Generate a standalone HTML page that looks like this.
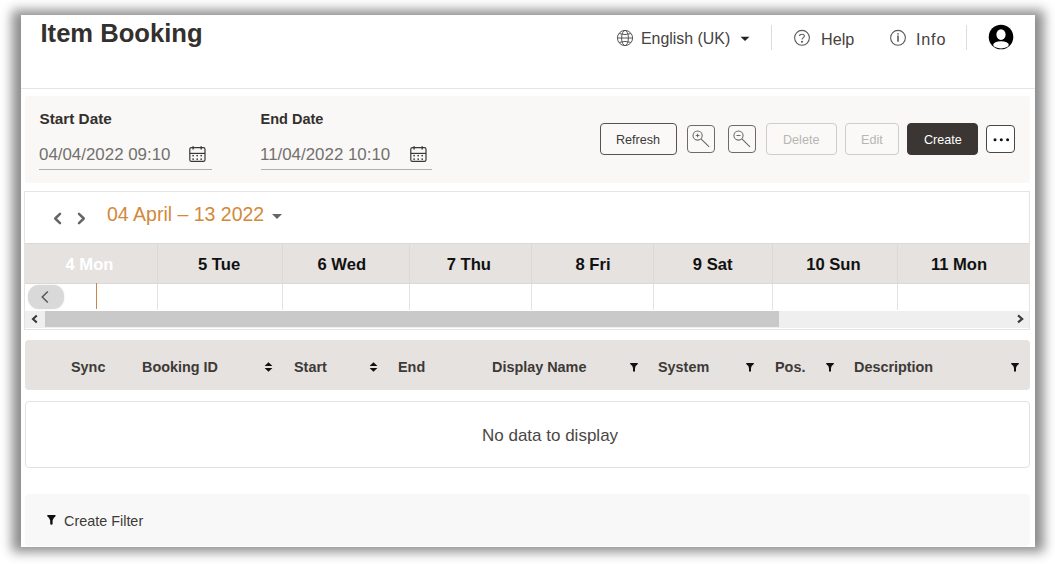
<!DOCTYPE html>
<html><head><meta charset="utf-8">
<style>
*{box-sizing:border-box;margin:0;padding:0}
html,body{width:1055px;height:564px;overflow:hidden;background:#fff}
body{position:relative;font-family:"Liberation Sans",sans-serif;color:#32302e}
.a{position:absolute;white-space:nowrap;line-height:1}
#shadow{position:absolute;left:12px;top:10px;width:1032px;height:542px;background:rgba(0,0,0,0.45);filter:blur(6px)}
#card{position:absolute;left:21px;top:15px;width:1014px;height:532px;background:#fff}
.b{font-weight:bold}
.dh{top:257px;font-size:16.6px}
.hdrline{position:absolute;left:21px;top:88px;width:1014px;height:1px;background:#e6e6e6}
.panel{position:absolute;left:25px;top:96px;width:1005px;height:87px;background:#f9f8f7;border-radius:3px}
.uline{position:absolute;height:1px;background:#b0aeac}
.btn{position:absolute;border:1px solid #5a5652;border-radius:4px;background:#faf9f8}
.btn.dis{border-color:#cfccc9}
.vsep{position:absolute;width:1px;background:#dcdcdc}
.cal{position:absolute;left:24px;top:191px;width:1006px;height:139px;border:1px solid #e4e4e4;background:#fff}
.dayhdr{position:absolute;left:25px;top:243px;width:1004px;height:41px;background:#e5e2df;border-top:1px solid #dbd8d5;border-bottom:1px solid #dbd8d5}
.csep{position:absolute;width:1px;background:#dbd8d5}
.rsep{position:absolute;width:1px;background:#e3e3e3}
.thead{position:absolute;left:25px;top:340px;width:1005px;height:50px;background:#e5e2df;border-radius:4px}
.nodata{position:absolute;left:25px;top:401px;width:1005px;height:67px;border:1px solid #e2e2e2;border-radius:4px;background:#fff}
.fpanel{position:absolute;left:25px;top:494px;width:1005px;height:51.5px;background:#f8f8f8;border-radius:4px}
</style></head><body>
<div id="shadow"></div><div id="card"></div>
<!-- header -->
<div class="a b" style="left:40.5px;top:21px;font-size:25.6px;color:#33302d">Item Booking</div>
<div class="hdrline"></div>

<svg class="a" style="left:616px;top:29px" width="18" height="18" viewBox="0 0 18 18" fill="none" stroke="#505050" stroke-width="0.95">
 <circle cx="9" cy="9" r="7.6"/><ellipse cx="9" cy="9" rx="3.4" ry="7.6"/><line x1="1.4" y1="9" x2="16.6" y2="9"/><path d="M3.2 4.6 Q9 6.6 14.8 4.6"/><path d="M3.2 13.4 Q9 11.4 14.8 13.4"/>
</svg>
<div class="a" style="left:641px;top:30.5px;font-size:15.9px;color:#454240">English (UK)</div>
<svg class="a" style="left:740px;top:36px" width="10" height="6" viewBox="0 0 10 6"><path d="M0.5 0.8 L9.5 0.8 L5 5 Z" fill="#222"/></svg>
<div class="vsep" style="left:771px;top:25px;height:25px"></div>

<svg class="a" style="left:793px;top:29px" width="18" height="18" viewBox="0 0 18 18" fill="none" stroke="#5a5a5a" stroke-width="1.1">
 <circle cx="9" cy="8.8" r="7.4"/>
 <path d="M6.6 7 C6.6 4.6 11.4 4.6 11.4 7 C11.4 8.6 9 8.8 9 10.6" />
 <circle cx="9" cy="12.8" r="0.5" fill="#555"/>
</svg>
<div class="a" style="left:821px;top:31px;font-size:16.2px;color:#454240">Help</div>

<svg class="a" style="left:889px;top:29px" width="18" height="18" viewBox="0 0 18 18" fill="none" stroke="#5a5a5a" stroke-width="1.1">
 <circle cx="9" cy="8.8" r="7.4"/>
 <line x1="9" y1="6.6" x2="9" y2="12.8" stroke-width="1.6"/><circle cx="9" cy="4.9" r="0.8" fill="#5a5a5a" stroke="none"/>
</svg>
<div class="a" style="left:916px;top:31px;font-size:16.2px;letter-spacing:0.8px;color:#454240">Info</div>
<div class="vsep" style="left:966px;top:25px;height:25px"></div>

<svg class="a" style="left:988px;top:24px" width="26" height="26" viewBox="0 0 26 26">
 <defs><clipPath id="cc"><circle cx="13" cy="13" r="12.3"/></clipPath></defs>
 <circle cx="13" cy="13" r="12.3" fill="#000"/>
 <g clip-path="url(#cc)" fill="#fff">
  <ellipse cx="13" cy="10.6" rx="4.6" ry="5.3"/>
  <ellipse cx="13" cy="20.8" rx="7.8" ry="3.6"/>
 </g>
</svg>

<!-- date panel -->
<div class="panel"></div>
<div class="a b" style="left:39.5px;top:111px;font-size:15.3px;color:#33302d">Start Date</div>
<div class="a" style="left:39px;top:146.5px;font-size:16.9px;color:#73706d">04/04/2022 09:10</div>
<div class="uline" style="left:39px;top:169px;width:173px"></div>
<div class="a b" style="left:260.5px;top:111.5px;font-size:14.5px;color:#33302d">End Date</div>
<div class="a" style="left:260px;top:146.5px;font-size:16.9px;color:#73706d">11/04/2022 10:10</div>
<div class="uline" style="left:261px;top:169px;width:171px"></div>

<svg class="a" style="left:189px;top:146px" width="17" height="17" viewBox="0 0 17 17" fill="none" stroke="#3a3836" stroke-width="1.2">
 <rect x="0.8" y="1.6" width="15.2" height="13.8" rx="1.6"/><line x1="0.8" y1="7.4" x2="16" y2="7.4"/>
 <line x1="4.1" y1="0.2" x2="4.1" y2="3.6" stroke-width="1.4"/><line x1="12.2" y1="0.2" x2="12.2" y2="3.6" stroke-width="1.4"/>
 <g fill="#3a3836" stroke="none"><rect x="3.35" y="8.9" width="1.5" height="1.5"/><rect x="7.45" y="8.9" width="1.5" height="1.5"/><rect x="11.45" y="8.9" width="1.5" height="1.5"/><rect x="3.35" y="12.4" width="1.5" height="1.5"/><rect x="7.45" y="12.4" width="1.5" height="1.5"/><rect x="11.45" y="12.4" width="1.5" height="1.5"/></g>
</svg>
<svg class="a" style="left:410px;top:146px" width="17" height="17" viewBox="0 0 17 17" fill="none" stroke="#3a3836" stroke-width="1.2">
 <rect x="0.8" y="1.6" width="15.2" height="13.8" rx="1.6"/><line x1="0.8" y1="7.4" x2="16" y2="7.4"/>
 <line x1="4.1" y1="0.2" x2="4.1" y2="3.6" stroke-width="1.4"/><line x1="12.2" y1="0.2" x2="12.2" y2="3.6" stroke-width="1.4"/>
 <g fill="#3a3836" stroke="none"><rect x="3.35" y="8.9" width="1.5" height="1.5"/><rect x="7.45" y="8.9" width="1.5" height="1.5"/><rect x="11.45" y="8.9" width="1.5" height="1.5"/><rect x="3.35" y="12.4" width="1.5" height="1.5"/><rect x="7.45" y="12.4" width="1.5" height="1.5"/><rect x="11.45" y="12.4" width="1.5" height="1.5"/></g>
</svg>

<!-- buttons -->
<div class="btn" style="left:600px;top:123px;width:77px;height:32px;border-width:1.6px;border-color:#57534f"></div>
<div class="a" style="left:616px;top:134px;font-size:12.6px;color:#3d3a37">Refresh</div>
<div class="btn" style="left:687px;top:125px;width:28px;height:28px;border-color:#6e6a67;border-width:1.3px"></div>
<svg class="a" style="left:687px;top:125px" width="28" height="28" viewBox="0 0 28 28" fill="none" stroke="#666" stroke-width="1.05">
 <circle cx="10.6" cy="10.5" r="4.6"/><line x1="14" y1="13.8" x2="22.2" y2="21.9"/><line x1="8.8" y1="10.5" x2="12.4" y2="10.5"/><line x1="10.6" y1="8.7" x2="10.6" y2="12.3"/>
</svg>
<div class="btn" style="left:728px;top:125px;width:28px;height:28px;border-color:#6e6a67;border-width:1.3px"></div>
<svg class="a" style="left:728px;top:125px" width="28" height="28" viewBox="0 0 28 28" fill="none" stroke="#666" stroke-width="1.05">
 <circle cx="10.5" cy="10.5" r="4.6"/><line x1="13.9" y1="13.8" x2="22" y2="21.9"/><line x1="8.5" y1="10.5" x2="12.5" y2="10.5"/>
</svg>
<div class="btn dis" style="left:766px;top:123px;width:71px;height:32px"></div>
<div class="a" style="left:783px;top:134px;font-size:12.6px;color:#b8b5b2">Delete</div>
<div class="btn dis" style="left:845px;top:123px;width:54px;height:32px"></div>
<div class="a" style="left:861px;top:134px;font-size:12.6px;color:#b8b5b2">Edit</div>
<div class="btn" style="left:907px;top:123px;width:71px;height:32px;background:#3b3633;border-color:#3b3633"></div>
<div class="a" style="left:924px;top:134px;font-size:12.6px;color:#fff">Create</div>
<div class="btn" style="left:986px;top:125px;width:29px;height:28px;background:#fff;border-color:#4a4643;border-width:1.3px"></div>
<svg class="a" style="left:986px;top:125px" width="28" height="28" viewBox="0 0 28 28" fill="#111">
 <circle cx="9" cy="14.7" r="1.5"/><circle cx="15.3" cy="14.7" r="1.5"/><circle cx="21.6" cy="14.7" r="1.5"/>
</svg>

<!-- calendar -->
<div class="cal"></div>
<svg class="a" style="left:52px;top:210px" width="36" height="16" viewBox="0 0 36 16" fill="none" stroke="#666" stroke-width="2.5" stroke-linecap="round" stroke-linejoin="round">
 <path d="M8 3.8 L3.2 8.5 L8 13.2"/><path d="M27 3.8 L31.8 8.5 L27 13.2"/>
</svg>
<div class="a" style="left:107px;top:205px;font-size:19.5px;color:#d2893a">04 April – 13 2022</div>
<svg class="a" style="left:271px;top:213px" width="12" height="7" viewBox="0 0 12 7"><path d="M1 1 L11 1 L6 6 Z" fill="#666"/></svg>

<div class="dayhdr"></div>
<div class="csep" style="left:157px;top:243px;height:41px"></div>
<div class="csep" style="left:282px;top:243px;height:41px"></div>
<div class="csep" style="left:409px;top:243px;height:41px"></div>
<div class="csep" style="left:531px;top:243px;height:41px"></div>
<div class="csep" style="left:653px;top:243px;height:41px"></div>
<div class="csep" style="left:772px;top:243px;height:41px"></div>
<div class="csep" style="left:897px;top:243px;height:41px"></div>
<div class="rsep" style="left:157px;top:284px;height:26px"></div>
<div class="rsep" style="left:282px;top:284px;height:26px"></div>
<div class="rsep" style="left:409px;top:284px;height:26px"></div>
<div class="rsep" style="left:531px;top:284px;height:26px"></div>
<div class="rsep" style="left:653px;top:284px;height:26px"></div>
<div class="rsep" style="left:772px;top:284px;height:26px"></div>
<div class="rsep" style="left:897px;top:284px;height:26px"></div>


<div class="a b dh" style="left:65.5px;color:#fff">4 Mon</div>
<div class="a b dh" style="left:198.0px;color:#111">5 Tue</div>
<div class="a b dh" style="left:317.5px;color:#111">6 Wed</div>
<div class="a b dh" style="left:446.7px;color:#111">7 Thu</div>
<div class="a b dh" style="left:575.5px;color:#111">8 Fri</div>
<div class="a b dh" style="left:692.8px;color:#111">9 Sat</div>
<div class="a b dh" style="left:806.2px;color:#111">10 Sun</div>
<div class="a b dh" style="left:930.9px;color:#111">11 Mon</div>
<div class="a" style="left:95.6px;top:283px;width:1.4px;height:26px;background:#cc8448"></div>
<div class="a" style="left:28px;top:285px;width:36px;height:24px;background:#d9d9d9;border-radius:11px;box-shadow:0 0 2px rgba(0,0,0,0.12)"></div>
<svg class="a" style="left:39px;top:290px" width="12" height="14" viewBox="0 0 12 14" fill="none" stroke="#5a5a5a" stroke-width="1.6"><path d="M8.8 1.5 L3.3 7 L8.8 12.5"/></svg>

<div class="a" style="left:25px;top:311px;width:1004px;height:17px;background:#efefef"></div>
<div class="a" style="left:45px;top:311px;width:734px;height:16px;background:#c9c9c9"></div>
<svg class="a" style="left:29px;top:313px" width="12" height="11" viewBox="0 0 12 11" fill="none" stroke="#3a3a3a" stroke-width="2.1"><path d="M7.8 2.4 L4 5.9 L7.8 9.4"/></svg>
<svg class="a" style="left:1014px;top:313px" width="12" height="11" viewBox="0 0 12 11" fill="none" stroke="#3a3a3a" stroke-width="2.1"><path d="M4 2.4 L8.2 5.9 L4 9.4"/></svg>

<!-- table header -->
<div class="thead"></div>
<div class="a b" style="left:71px;top:360px;font-size:14.4px;color:#3d3a37">Sync</div>
<div class="a b" style="left:142px;top:360px;font-size:14.4px;color:#3d3a37">Booking ID</div>
<svg class="a" style="left:264px;top:361px" width="9" height="11" viewBox="0 0 9 11" fill="#111"><path d="M0.6 5 L4.5 1.2 L8.4 5 Z M0.6 7 L8.4 7 L4.5 10.8 Z"/></svg>
<div class="a b" style="left:294px;top:360px;font-size:14.4px;color:#3d3a37">Start</div>
<svg class="a" style="left:368.5px;top:361px" width="9" height="11" viewBox="0 0 9 11" fill="#111"><path d="M0.6 5 L4.5 1.2 L8.4 5 Z M0.6 7 L8.4 7 L4.5 10.8 Z"/></svg>
<div class="a b" style="left:398px;top:360px;font-size:14.4px;color:#3d3a37">End</div>
<div class="a b" style="left:492px;top:360px;font-size:14.4px;color:#3d3a37">Display Name</div>
<svg class="a fil" style="left:630px;top:362.5px" width="8" height="9" viewBox="0 0 8 9" fill="#111"><path d="M0.2 0 L7.8 0 L7.8 1.1 Q5 3.2 5 5 L5 8.3 Q4 9 3 8.3 L3 5 Q3 3.2 0.2 1.1 Z"/></svg>
<div class="a b" style="left:658px;top:360px;font-size:14.4px;color:#3d3a37">System</div>
<svg class="a" style="left:746px;top:362.5px" width="8" height="9" viewBox="0 0 8 9" fill="#111"><path d="M0.2 0 L7.8 0 L7.8 1.1 Q5 3.2 5 5 L5 8.3 Q4 9 3 8.3 L3 5 Q3 3.2 0.2 1.1 Z"/></svg>
<div class="a b" style="left:775px;top:360px;font-size:14.4px;color:#3d3a37">Pos.</div>
<svg class="a" style="left:825.5px;top:362.5px" width="8" height="9" viewBox="0 0 8 9" fill="#111"><path d="M0.2 0 L7.8 0 L7.8 1.1 Q5 3.2 5 5 L5 8.3 Q4 9 3 8.3 L3 5 Q3 3.2 0.2 1.1 Z"/></svg>
<div class="a b" style="left:854px;top:360px;font-size:14.4px;color:#3d3a37">Description</div>
<svg class="a" style="left:1011px;top:362.5px" width="8" height="9" viewBox="0 0 8 9" fill="#111"><path d="M0.2 0 L7.8 0 L7.8 1.1 Q5 3.2 5 5 L5 8.3 Q4 9 3 8.3 L3 5 Q3 3.2 0.2 1.1 Z"/></svg>

<!-- no data -->
<div class="nodata"></div>
<div class="a" style="left:482px;top:426.5px;font-size:17px;color:#4a4744">No data to display</div>

<!-- create filter -->
<div class="fpanel"></div>
<svg class="a" style="left:46.5px;top:514.5px" width="9" height="10" viewBox="0 0 9 10" fill="#111"><path d="M0.3 0 L8.5 0 L8.5 1.3 Q5.6 3.6 5.6 5.6 L5.6 9.3 Q4.4 10.1 3.2 9.3 L3.2 5.6 Q3.2 3.6 0.3 1.3 Z"/></svg>
<div class="a" style="left:64px;top:513.5px;font-size:14.4px;color:#3d3a37">Create Filter</div>
</body></html>
